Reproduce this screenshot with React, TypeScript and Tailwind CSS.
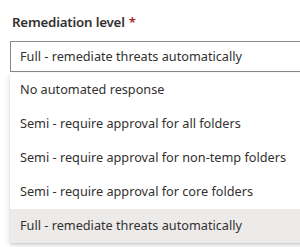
import React from "react";

const OPTIONS = [
  "No automated response",
  "Semi - require approval for all folders",
  "Semi - require approval for non-temp folders",
  "Semi - require approval for core folders",
  "Full - remediate threats automatically",
];

export default function App() {
  const selected = OPTIONS.length - 1;
  return (
    <div
      className="h-[247px] w-[300px] overflow-hidden bg-white text-[#323130]"
      style={{ fontFamily: '"Noto Sans", "Open Sans", sans-serif' }}
    >
      <div className="w-[330px] pl-[10px] pt-[7px]">
        <label className="flex py-[5px] pl-[2px] text-[13.3px] font-semibold leading-5 tracking-[-0.2px]">
          Remediation level
          <span className="pl-1 text-[#a4262c]">*</span>
        </label>
        <div className="mt-[4px] flex h-[31px] items-center border border-[#8a8886] pl-[9px] text-[12.7px]">
          Full - remediate threats automatically
        </div>
        <ul className="mt-[1px] bg-white shadow-[0_3.2px_7.2px_rgba(0,0,0,0.132),0_0.6px_1.8px_rgba(0,0,0,0.108)]">
          {OPTIONS.map((opt, i) => (
            <li
              key={opt}
              className={
                "flex h-[34px] items-center pl-[10px] text-[12.7px] " +
                (i === selected ? "bg-[#edebe9]" : "bg-white")
              }
            >
              {opt}
            </li>
          ))}
        </ul>
      </div>
    </div>
  );
}
